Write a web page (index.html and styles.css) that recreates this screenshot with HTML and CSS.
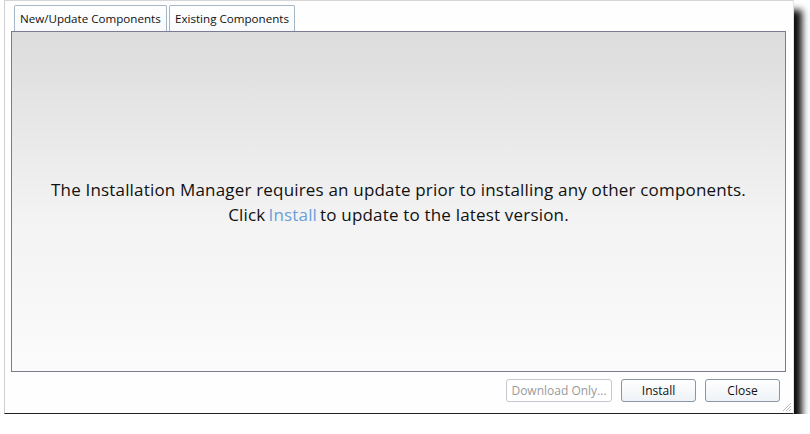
FILE: index.html
```html
<!DOCTYPE html>
<html>
<head>
<meta charset="utf-8">
<link rel="stylesheet" href="styles.css">
</head>
<body>
<div class="window">
  <div class="tabs">
    <div class="tab active">New/Update Components</div>
    <div class="tab">Existing Components</div>
  </div>
  <div class="panel">
    <div class="msg">
      <div class="line">The Installation Manager requires an update prior to installing any other components.</div>
      <div class="line"><span>Click</span><span class="link">Install</span><span>to update to the latest version.</span></div>
    </div>
  </div>
  <div class="actions">
    <button class="btn disabled">Download Only...</button>
    <button class="btn">Install</button>
    <button class="btn">Close</button>
  </div>
  <svg class="grip" width="10" height="10" viewBox="0 0 10 10">
    <path d="M9 1 L1 9 M9 4 L4 9 M9 7 L7 9" stroke="#b8b8b8" stroke-width="1"/>
  </svg>
</div>
</body>
</html>
```
FILE: styles.css
```css
html, body { margin: 0; padding: 0; background: #fff; }
body { font-family: "Segoe UI", "Open Sans", "DejaVu Sans", sans-serif; }
.window {
  position: relative;
  box-sizing: border-box;
  margin-left: 4px;
  width: 790px;
  height: 414px;
  background: #fefefe;
  border-top: 1px solid #d6d6d6;
  border-left: 1px solid #d0d0d0;
  border-right: 1px solid #e2e2e2;
  border-bottom: 1px solid #222;
  box-shadow: 8px 10px 7px rgba(0,0,0,0.95);
  padding: 4px 7px 0 6px;
  display: flex;
  flex-direction: column;
}
.tabs { display: flex; gap: 2px; padding-left: 3px; }
.tab {
  box-sizing: border-box;
  height: 26px;
  padding: 0 5px;
  border: 1px solid #a7b6c4;
  border-bottom: none;
  border-radius: 2px 2px 0 0;
  background: linear-gradient(#ffffff, #f7f9fb);
  font-size: 11.6px;
  line-height: 26px;
  color: #111;
  white-space: nowrap;
}
.tab.active { width: 153px; }
.tab:not(.active) { width: 126px; }
.panel {
  box-sizing: border-box;
  height: 341px;
  border: 1px solid #7c7b92;
  background: linear-gradient(#dcdcdc, #f3f3f3 55%, #fbfbfb);
  display: flex;
  align-items: center;
  justify-content: center;
}
.msg {
  margin: 0;
  text-align: center;
  font-size: 17px;
  letter-spacing: 0.18px;
  line-height: 25px;
  color: #111;
}
.line { display: flex; justify-content: center; gap: 3px; }
.link { color: #6a9fd8; }
.actions {
  display: flex;
  justify-content: flex-end;
  gap: 9px;
  margin-top: 7px;
  padding-right: 6px;
}
.btn {
  box-sizing: border-box;
  height: 23px;
  padding: 0;
  border: 1px solid #8a97a3;
  border-radius: 3px;
  background: linear-gradient(#ffffff, #eef2f6);
  font-family: inherit;
  font-size: 12px;
  color: #111;
  width: 75px;
}
.btn.disabled { width: 106px; color: #9a9a9a; border-color: #c3c9cf; background: #fff; }
.grip { position: absolute; right: 1px; bottom: 1px; }
```
